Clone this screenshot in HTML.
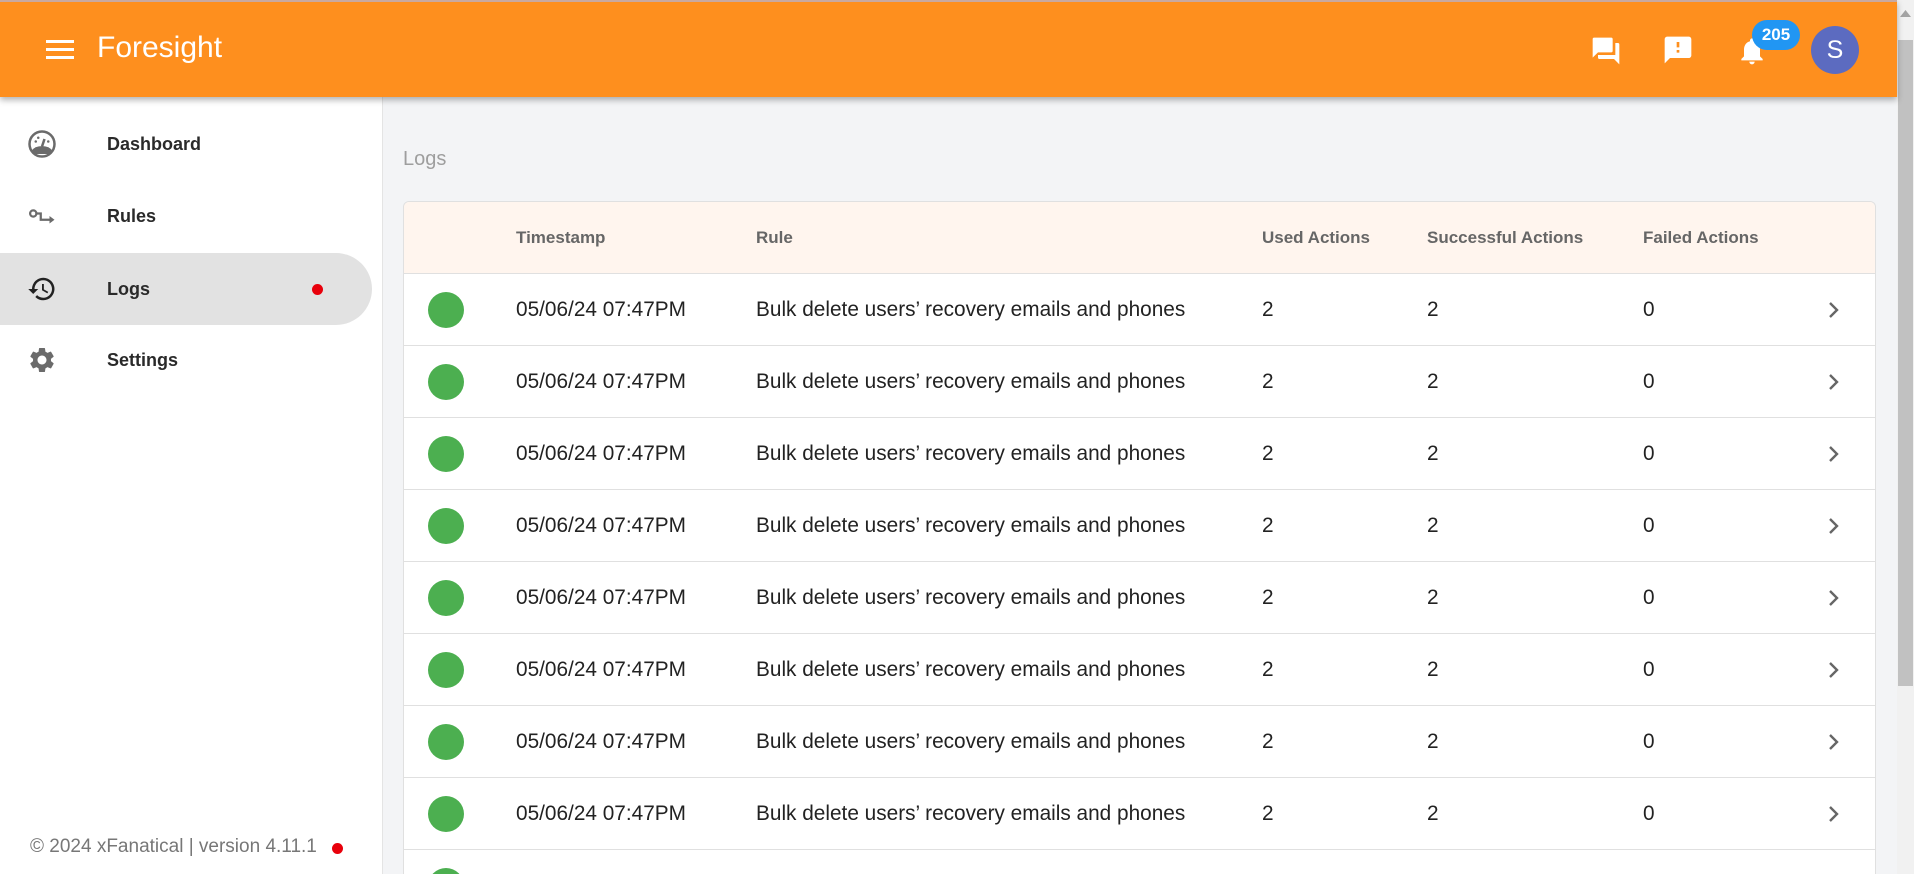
<!DOCTYPE html>
<html><head><meta charset="utf-8"><style>
*{box-sizing:border-box;margin:0;padding:0}
html{overflow:hidden;height:874px}
body{width:1914px;height:874px;overflow:hidden;background:#f3f4f6;font-family:"Liberation Sans",Arial,sans-serif;position:relative}
.hdr{position:absolute;left:0;top:0;width:1897px;height:97px;background:#fe8f1e;border-top:2px solid #c9a9a0;box-shadow:0 3px 6px rgba(0,0,0,.3);z-index:5}
.title{position:absolute;left:97px;top:29px;color:#fff;font-size:30px}
.side{position:absolute;left:0;top:97px;width:383px;height:777px;background:#fff;border-right:1px solid #e4e4e4}
.nav{position:absolute;left:0;height:72px;width:372px;display:flex;align-items:center;font-size:18px;color:#2a2a2a;font-weight:bold}
.nav span{position:absolute;left:107px}
.nav svg{position:absolute;left:27px}
.sel{background:#e2e2e2;border-radius:0 36px 36px 0}
.dot{position:absolute;width:11px;height:11px;border-radius:50%;background:#e8000b}
.foot{position:absolute;left:30px;top:836px;font-size:19px;color:#777}
.scroll{position:absolute;right:0;top:0;width:17px;height:874px;background:#f1f1f1}
.thumb{position:absolute;right:1px;top:40px;width:15px;height:646px;background:#c1c1c1}
.ptitle{position:absolute;left:403px;top:148px;font-size:20px;color:#9e9e9e}
.card{position:absolute;left:403px;top:201px;width:1473px;height:673px;background:#fff;border:1px solid #e0e0e0;border-bottom:none;border-radius:6px 6px 0 0;overflow:hidden}
.row{position:absolute;left:0;width:100%;height:72px;border-bottom:1px solid #e0e0e0;font-size:20.8px;color:#222}
.row div{position:absolute;top:0;line-height:72px}
.th{background:#fff5ee;font-size:17px;font-weight:bold;color:#666}
.c{left:24px;top:18px!important;width:36px;height:36px;border-radius:50%;background:#4caf50}
</style></head><body>
<div class="hdr">
<svg style="position:absolute;left:46px;top:37px" width="28" height="20" viewBox="0 0 28 20"><rect y="1" width="28" height="3" fill="#fff"/><rect y="9" width="28" height="3" fill="#fff"/><rect y="17" width="28" height="3" fill="#fff"/></svg>
<div class="title">Foresight</div>
<svg style="position:absolute;left:1590px;top:33px" width="32" height="32" viewBox="0 0 24 24"><path fill="#fff" d="M21 6h-2v9H6v2c0 .55.45 1 1 1h11l4 4V7c0-.55-.45-1-1-1zm-4 6V3c0-.55-.45-1-1-1H3c-.55 0-1 .45-1 1v14l4-4h10c.55 0 1-.45 1-1z"/></svg>
<svg style="position:absolute;left:1662px;top:32px" width="32" height="32" viewBox="0 0 24 24"><path fill="#fff" d="M20 2H4c-1.1 0-2 .9-2 2v18l4-4h14c1.1 0 2-.9 2-2V4c0-1.1-.9-2-2-2zm-7 12h-2v-2h2v2zm0-4h-2V6h2v4z"/></svg>
<svg style="position:absolute;left:1736px;top:33px" width="32" height="32" viewBox="0 0 24 24"><path fill="#fff" d="M12 22c1.1 0 2-.9 2-2h-4c0 1.1.89 2 2 2zm6-6v-5c0-3.07-1.64-5.64-4.5-6.32V4c0-.83-.67-1.5-1.5-1.5s-1.5.67-1.5 1.5v.68C7.630 5.36 6 7.92 6 11v5l-2 2v1h16v-1l-2-2z"/></svg>
<div style="position:absolute;left:1752px;top:18px;width:48px;height:30px;border-radius:15px;background:#2196f3;color:#fff;font-weight:bold;font-size:17px;text-align:center;line-height:30px">205</div>
<div style="position:absolute;left:1811px;top:24px;width:48px;height:48px;border-radius:50%;background:#5c6bc0;color:#fff;font-size:25px;text-align:center;line-height:48px">S</div>
</div>
<div class="side">
<div class="nav" style="top:11px"><svg width="30" height="30" viewBox="0 0 24 24"><circle cx="12" cy="12" r="10" fill="none" stroke="#6b6b6b" stroke-width="2"/><path d="M4 17a9 6 0 0 1 16 0l-2 3H6z" fill="#6b6b6b"/><path d="M12 14l2-6" stroke="#6b6b6b" stroke-width="2"/><circle cx="7" cy="10" r="1" fill="#6b6b6b"/><circle cx="9" cy="7" r="1" fill="#6b6b6b"/><circle cx="17" cy="10" r="1" fill="#6b6b6b"/></svg><span>Dashboard</span></div>
<div class="nav" style="top:83px"><svg width="30" height="30" viewBox="0 0 24 24"><circle cx="5" cy="10" r="2.5" fill="none" stroke="#6b6b6b" stroke-width="1.8"/><path d="M7.5 10H11v5h8" fill="none" stroke="#6b6b6b" stroke-width="1.8"/><path d="M18 12l4 3-4 3z" fill="#6b6b6b"/></svg><span>Rules</span></div>
<div class="nav sel" style="top:156px"><svg width="30" height="30" viewBox="0 0 24 24"><path fill="#222" d="M13 3a9 9 0 0 0-9 9H1l3.89 3.89.07.14L9 12H6c0-3.87 3.13-7 7-7s7 3.130 7 7-3.13 7-7 7c-1.93 0-3.68-.79-4.94-2.06l-1.42 1.42A8.954 8.954 0 0 0 13 21a9 9 0 0 0 0-18zm-1 5v5l4.28 2.54.72-1.21-3.5-2.08V8H12z"/></svg><span>Logs</span><div class="dot" style="left:312px;top:31px"></div></div>
<div class="nav" style="top:227px"><svg width="30" height="30" viewBox="0 0 24 24"><path fill="#6b6b6b" d="M19.14 12.94c.04-.3.06-.61.06-.94 0-.32-.02-.64-.07-.94l2.03-1.58a.49.49 0 0 0 .12-.61l-1.92-3.32a.488.488 0 0 0-.59-.22l-2.39.96c-.5-.38-1.03-.7-1.62-.94l-.36-2.54a.484.484 0 0 0-.48-.41h-3.84c-.24 0-.43.17-.47.41l-.36 2.540c-.59.24-1.13.57-1.62.94l-2.39-.96c-.22-.08-.47 0-.59.22L2.74 8.87c-.12.21-.08.47.12.61l2.03 1.58c-.05.3-.09.63-.09.94s.02.64.07.94l-2.03 1.58a.49.49 0 0 0-.12.61l1.92 3.32c.12.22.37.29.59.22l2.39-.96c.5.38 1.03.7 1.62.94l.36 2.54c.05.24.24.41.48.41h3.84c.24 0 .44-.17.47-.41l.36-2.54c.59-.24 1.13-.56 1.62-.94l2.39.96c.22.08.47 0 .59-.22l1.92-3.32c.12-.22.07-.47-.12-.61l-2.01-1.58zM12 15.6c-1.98 0-3.6-1.62-3.6-3.6s1.62-3.6 3.6-3.6 3.6 1.62 3.6 3.6-1.62 3.6-3.6 3.6z"/></svg><span>Settings</span></div>
</div>
<div class="foot">© 2024 xFanatical | version 4.11.1</div>
<div class="dot" style="left:332px;top:843px"></div>
<div class="ptitle">Logs</div>
<div class="card">
<div class="row th" style="top:0"><div style="left:112px">Timestamp</div><div style="left:352px">Rule</div><div style="left:858px">Used Actions</div><div style="left:1023px">Successful Actions</div><div style="left:1239px">Failed Actions</div></div>
<div id="rows"></div>
</div>
<div class="scroll"><div class="thumb"></div><svg style="position:absolute;left:3px;top:10px" width="11" height="7"><path d="M0 7L5.5 0 11 7z" fill="#a3a3a3"/></svg></div>
<script>
var h='';for(var i=0;i<9;i++){var t=72+i*72;h+='<div class="row" style="top:'+t+'px"><div class="c"></div><div style="left:112px">05/06/24 07:47PM</div><div style="left:352px">Bulk delete users’ recovery emails and phones</div><div style="left:858px">2</div><div style="left:1023px">2</div><div style="left:1239px">0</div><svg style="position:absolute;left:1423px;top:26px" width="14" height="20" viewBox="0 0 14 20"><path d="M3 3l7 7-7 7" fill="none" stroke="#666" stroke-width="2.4"/></svg></div>';}
document.getElementById('rows').innerHTML=h;
</script>
</body></html>
